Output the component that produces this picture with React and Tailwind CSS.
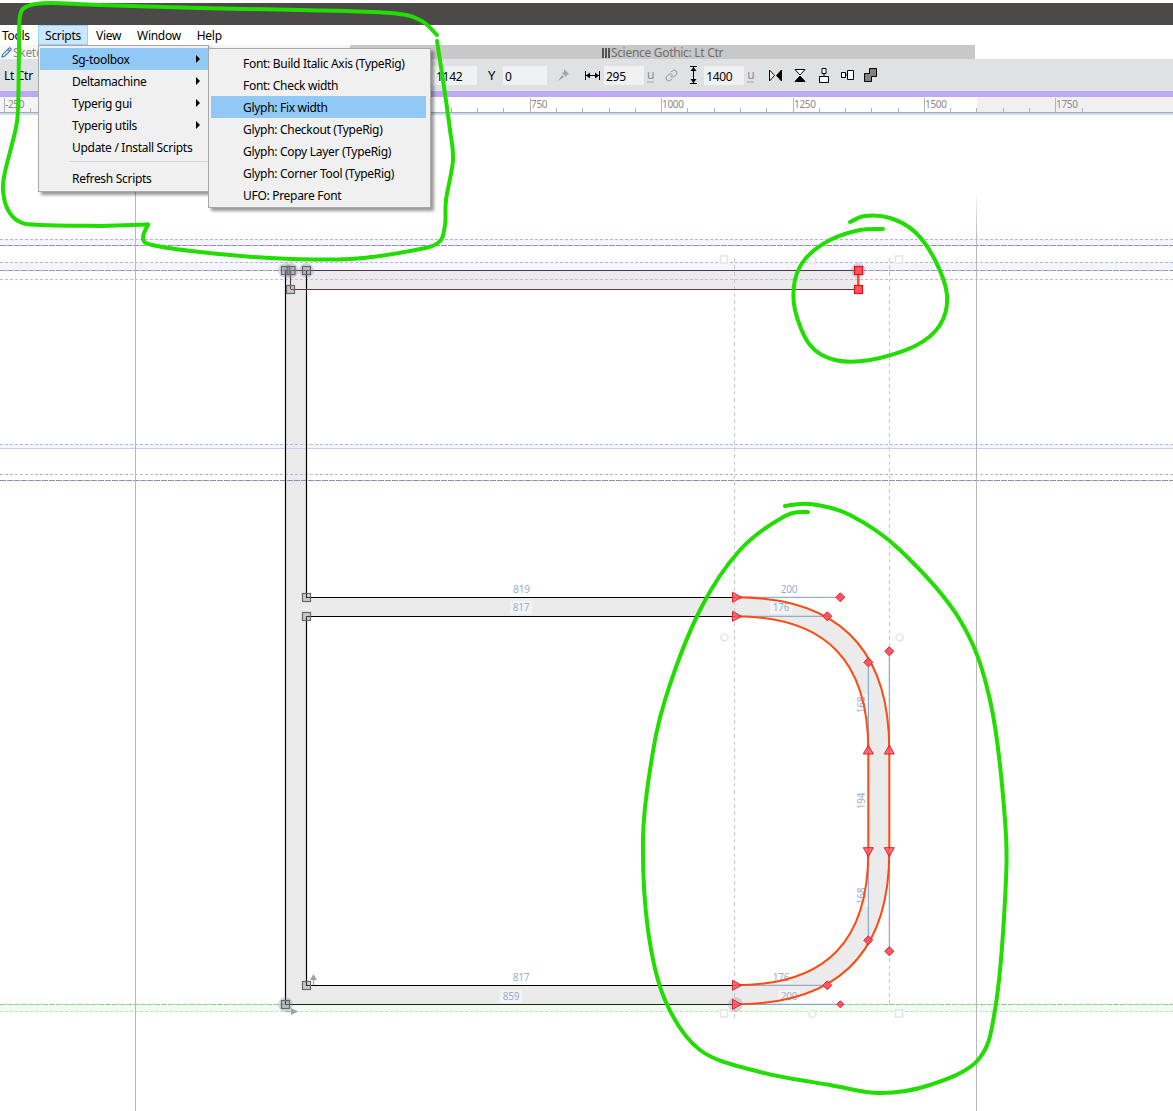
import React from "react";
import { Link as LinkIcon, Pencil } from "lucide-react";

const menuBar = ["View", "Window", "Help"];
const scripts = ["Sg-toolbox", "Deltamachine", "Typerig gui", "Typerig utils"];
const toolbox = [
  "Font: Build Italic Axis (TypeRig)",
  "Font: Check width",
  "Glyph: Fix width",
  "Glyph: Checkout (TypeRig)",
  "Glyph: Copy Layer (TypeRig)",
  "Glyph: Corner Tool (TypeRig)",
  "UFO: Prepare Font",
];

// catmull-rom through the points, good enough for hand drawn marker lines
function smooth(pts) {
  let d = `M${pts[0][0]} ${pts[0][1]}`;
  for (let i = 0; i < pts.length - 1; i++) {
    const p0 = pts[i - 1] || pts[i];
    const p1 = pts[i];
    const p2 = pts[i + 1];
    const p3 = pts[i + 2] || p2;
    d += ` C${p1[0] + (p2[0] - p0[0]) / 6} ${p1[1] + (p2[1] - p0[1]) / 6} ${p2[0] - (p3[0] - p1[0]) / 6} ${p2[1] - (p3[1] - p1[1]) / 6} ${p2[0]} ${p2[1]}`;
  }
  return d;
}

const markerTop = [[437, 35], [420, 20], [390, 13], [300, 10], [200, 8], [100, 5], [50, 3], [28, 6], [20, 16], [19, 50], [18, 110], [15, 132], [5, 172], [3, 190], [8, 210], [20, 222], [40, 225], [100, 226]];
const markerTop2 = [[100, 226], [148, 224.5]];
const markerTop3 = [[148, 224.5], [143, 238], [152, 245], [200, 252], [270, 258], [350, 259], [410, 251], [438, 243], [445, 225], [446, 200], [453, 160], [450, 130], [443, 80], [437, 41]];
const markerCorner = [[883, 229], [860, 230], [830, 240], [806, 258], [795, 280], [795, 310], [810, 345], [835, 360], [870, 360], [915, 346], [940, 325], [947, 295], [935, 260], [915, 232], [890, 218], [865, 216], [850, 222]];
const markerCurve = [[808, 512], [785, 516], [740, 550], [700, 610], [665, 700], [650, 770], [643, 840], [648, 930], [665, 1000], [700, 1050], [760, 1072], [830, 1085], [880, 1093], [930, 1085], [978, 1060], [995, 1010], [1005, 900], [1005, 820], [990, 700], [960, 620], [900, 550], [850, 515], [810, 504], [785, 506]];

function Arrow() {
  return <span className="ml-auto mr-[8px] -mt-[3px] w-0 h-0 border-y-[4px] border-y-transparent border-l-[4px] border-l-black" />;
}

function Field({ value, className }) {
  return (
    <div className={`h-[19px] bg-[#f0f1f3] pl-[2px] text-[12px] leading-[21px] text-black ${className}`}>
      {value}
    </div>
  );
}

function Unit({ className }) {
  return <span className={`border-b-2 border-[#c4c4c4] text-[12px] leading-[13px] text-[#7f8fa8] ${className}`}>u</span>;
}

function Toolbar() {
  return (
    <div className="flex h-[32px] items-center bg-[#e0e1e3] text-[12px] text-black">
      <span className="ml-[4px] w-[426px] pt-[2px]">Lt Ctr</span>
      <Field value="1142" className="w-[47px] pl-[6px]" />
      <span className="ml-[11px] w-[15px] pt-[1px] text-[13px]">Y</span>
      <Field value="0" className="w-[44px]" />
      <svg className="ml-[9px] h-[14px] w-[14px]" viewBox="0 0 14 14">
        <path d="M8 1l5 5-2 1-1 2-4-4 2-1zM6 7l-4 6 6-4z" fill="#a3a3a3" />
      </svg>
      <svg className="ml-[15px] h-[9px] w-[15px]" viewBox="0 0 15 9">
        <path d="M.5 0v9M14.500 0v9M1 4.500h13" stroke="#000" fill="none" />
        <path d="M1 4.500l4-3v6zM14 4.500l-4-3v6z" fill="#000" />
      </svg>
      <Field value="295" className="ml-[4px] w-[40px]" />
      <Unit className="ml-[3px]" />
      <LinkIcon className="ml-[11px] h-[13px] w-[13px] text-[#808080]" strokeWidth={1.5} />
      <svg className="ml-[11px] h-[18px] w-[9px]" viewBox="0 0 9 18">
        <path d="M1 .5h7M1 17.500h7M4.500 1v16" stroke="#000" fill="none" />
        <path d="M4.500 1l-3 4h6zM4.500 17l-3-4h6z" fill="#000" />
      </svg>
      <Field value="1400" className="ml-[6px] w-[40px]" />
      <Unit className="ml-[3px]" />
      <svg className="ml-[15px] h-[13px] w-[13px]" viewBox="0 0 13 13">
        <path d="M.5 1l5 5.500-5 5.500z" fill="#fff" stroke="#000" />
        <path d="M12.500 1l-5 5.500 5 5.500z" fill="#000" stroke="#000" />
      </svg>
      <svg className="ml-[12px] h-[13px] w-[12px]" viewBox="0 0 12 13">
        <path d="M1 .5h10l-5 5.500z" fill="#fff" stroke="#000" />
        <path d="M1 12.500h10l-5-5.500z" fill="#000" stroke="#000" />
      </svg>
      <svg className="ml-[13px] h-[15px] w-[10px]" viewBox="0 0 10 15">
        <path d="M3 .5h4v5H3zM.5 8.500h9v6h-9zM5 5.500v3" fill="#fff" stroke="#000" />
      </svg>
      <svg className="ml-[12px] h-[10px] w-[13px]" viewBox="0 0 13 10">
        <path d="M.5 2.500h4v5h-4zM6.500 .5h6v9h-6zM4.500 5h2" fill="#fff" stroke="#000" />
      </svg>
      <svg className="ml-[10px] h-[14px] w-[13px]" viewBox="0 0 13 14">
        <path d="M5.500 .5h7v8h-5v5h-7v-8h5z" fill="#808080" stroke="#000" />
      </svg>
    </div>
  );
}

function Ruler() {
  const xs = [];
  for (let v = -250; v <= 1800; v += 50) xs.push(v);
  return (
    <svg className="block h-[18px] w-full" viewBox="0 97 1173 18">
      <rect x="0" y="97" width="1173" height="15" fill="#fff" />
      <rect x="0" y="97" width="135" height="15" fill="#f4f4f4" />
      <rect x="977" y="97" width="196" height="15" fill="#f0f0f0" />
      {xs.map((v) => {
        const x = Math.round(135.5 + v * 0.5256) + 0.5;
        const major = v % 250 === 0;
        return <path key={v} d={`M${x} ${major ? 98 : 108}V112`} stroke="#b4b4b4" />;
      })}
      {[-250, 750, 1000, 1250, 1500, 1750].map((v) => (
        <text key={v} x={Math.round(135.5 + v * 0.5256) + 1} y="108" className="fill-[#8a8a8a] text-[10px]">
          {v}
        </text>
      ))}
      <rect x="0" y="112" width="1173" height="1" fill="#a8a8a8" />
      <rect x="0" y="113" width="1173" height="2" fill="#ccdcf2" />
    </svg>
  );
}

function Square({ x, y }) {
  return <rect x={x - 4} y={y - 4} width="8" height="8" fill="#88888855" stroke="#666" strokeWidth="1.200" />;
}

function RedSquare({ x, y }) {
  return <rect x={x - 4} y={y - 4} width="8" height="8" fill="#ff5560" stroke="#e0101c" strokeWidth="1.200" />;
}

function Diamond({ x, y, r = 4.5 }) {
  return <path d={`M${x - r} ${y}L${x} ${y - r}L${x + r} ${y}L${x} ${y + r}z`} fill="#ff5560" stroke="#d8202c" />;
}

function Tri({ x, y, dir }) {
  const d = {
    right: `M${x - 2.5} ${y - 5}L${x + 6.5} ${y}L${x - 2.5} ${y + 5}z`,
    up: `M${x} ${y - 5}L${x + 5} ${y + 4}L${x - 5} ${y + 4}z`,
    down: `M${x} ${y + 5}L${x + 5} ${y - 4}L${x - 5} ${y - 4}z`,
  }[dir];
  return <path d={d} fill="#ff5560" fillOpacity="0.8" stroke="#e0202c" />;
}

function Label({ x, y, plate, rotate, children }) {
  return (
    <g transform={rotate ? `rotate(-90 ${x} ${y})` : undefined}>
      {plate && <rect x={x - 11} y={y - 7} width="22" height="13" fill="#fff" fillOpacity="0.45" />}
      <text x={x} y={y + 3} textAnchor="middle" className="fill-[#94aed0] text-[10px]">
        {children}
      </text>
    </g>
  );
}

function Canvas() {
  const handles = "M735 597.300H840.300M735 616.300H827.300M868.300 662.300V750M889.300 651.300V750M868.300 851.700V940.300M889.300 851.700V951.300M735 985.300H827.300M735 1004.300H840.300";
  return (
    <svg className="block h-[996px] w-full" viewBox="0 115 1173 996">
      <defs>
        <linearGradient id="fade" x1="0" y1="0" x2="0" y2="1">
          <stop offset="0" stopColor="#b8b8b8" stopOpacity="0" />
          <stop offset="0.05" stopColor="#b8b8b8" />
        </linearGradient>
      </defs>

      <rect x="0" y="239" width="1173" height="6" fill="#f5f5fd" />
      <rect x="0" y="262" width="1173" height="8" fill="#f5f5fd" />
      <rect x="0" y="444" width="1173" height="4" fill="#f5f5fd" />
      <rect x="0" y="1004" width="1173" height="8" fill="#f3fcf3" />

      <path
        d="M285.300 270.300H858.300V289.300H306.300V597.300H735C840.300 597.300 889.300 651.300 889.300 750V851.700C889.300 951.300 840.300 1004.300 735 1004.300H285.300zM306.300 616.300V985.300H735C827.300 985.300 868.300 940.300 868.300 851.700V750C868.300 662.300 827.300 616.300 735 616.300z"
        fill="#ebebeb"
        fillRule="evenodd"
      />

      <g fill="none" strokeWidth="1">
        <path d="M0 239.500H1173M0 262.500H1173M0 444.500H1173M0 474.500H1173" stroke="#b4b4ea" strokeDasharray="3 2" />
        <path d="M0 245.500H1173M0 480.500H1173" stroke="#8f8fb4" strokeDasharray="6 1" />
        <path d="M0 270.500H1173" stroke="#9a94b8" strokeDasharray="6 1" />
        <path d="M0 279.500H1173" stroke="#d4b4d4" strokeDasharray="3 2" />
        <path d="M0 448.500H1173" stroke="#ccccf2" />
        <path d="M0 1004.500H1173" stroke="#8fcc8f" strokeDasharray="6 1" />
        <path d="M0 1011.500H1173" stroke="#b5e6b5" strokeDasharray="3 2" />
        <path d="M135.500 115V1111" stroke="#b8b8b8" />
        <path d="M734.500 258V1020M889.500 258V1004" stroke="#c8c8c8" strokeDasharray="4 3" />
      </g>
      <rect x="976" y="190" width="1" height="921" fill="url(#fade)" />

      <g fill="#fff" stroke="#e4e4e4" strokeWidth="1.500">
        <rect x="720.500" y="256" width="7" height="7" />
        <circle cx="812.500" cy="260" r="3.500" />
        <rect x="895.500" y="256" width="7" height="7" />
        <circle cx="724.500" cy="637.500" r="3.500" />
        <circle cx="899.500" cy="637.500" r="3.500" />
        <rect x="720.500" y="1010" width="7" height="7" />
        <circle cx="812.500" cy="1014" r="3.500" />
        <rect x="895.500" y="1010" width="7" height="7" />
      </g>

      <g fill="none" stroke="#000" strokeWidth="1.200">
        <path d="M285.500 270V1004.500M306.500 270V597.500H735M306.500 616.500V985.500H735M306.500 616.500H735" />
        <path d="M285.500 1004.500H735" stroke="#0c2a0c" />
        <path d="M285.500 270.500H855" stroke="#4f2f52" />
        <path d="M290.500 289.500H855M290.500 271V289" stroke="#5a3a3a" />
      </g>

      <path d={handles} fill="none" stroke="#7f9cc0" strokeWidth="1" />

      <Label x={521.500} y={590}>819</Label>
      <Label x={521} y={608} plate>817</Label>
      <Label x={521} y={978}>817</Label>
      <Label x={511} y={997} plate>859</Label>
      <Label x={789} y={590}>200</Label>
      <Label x={781} y={608} plate>176</Label>
      <Label x={781} y={978} plate>176</Label>
      <Label x={789} y={997} plate>200</Label>
      <Label x={862} y={705} plate rotate>168</Label>
      <Label x={862} y={801} rotate>194</Label>
      <Label x={862} y={896} plate rotate>168</Label>

      <g fill="none" stroke="#ff4a12" strokeWidth="2">
        <path d="M735 597.300C840.300 597.300 889.300 651.300 889.300 750V851.700C889.300 951.300 840.300 1004.300 735 1004.300" />
        <path d="M735 616.300C827.300 616.300 868.300 662.300 868.300 750V851.700C868.300 940.300 827.300 985.300 735 985.300" />
        <path d="M858.300 270.300V289.300" strokeWidth="2.500" />
      </g>

      <g fill="#7d8ba0" fillOpacity="0.3">
        <circle cx="285.500" cy="270.500" r="7.500" />
        <circle cx="291" cy="270.500" r="7.500" />
        <circle cx="306.500" cy="270.500" r="7.500" />
        <circle cx="285.500" cy="1004.500" r="7.500" />
        <circle cx="735.500" cy="1004.500" r="7.500" />
        <circle cx="858.500" cy="270.500" r="7.500" />
      </g>

      <Square x={285.500} y={270.500} />
      <Square x={291} y={270.500} />
      <Square x={306.500} y={270.500} />
      <Square x={290.500} y={289.500} />
      <Square x={306.500} y={597.500} />
      <Square x={306.500} y={616.500} />
      <Square x={306.500} y={985.500} />
      <Square x={285.500} y={1004.500} />

      <path d="M313.500 985V977" stroke="#b0b0b0" strokeWidth="1.500" />
      <path d="M313.500 974l3.500 6h-7z" fill="#a0a0a0" />
      <path d="M286 1011.500H292" stroke="#b0b0b0" strokeWidth="1.500" />
      <path d="M298 1011.500l-7 3.500v-7z" fill="#a0a0a0" />

      <RedSquare x={858.500} y={270.500} />
      <RedSquare x={858.500} y={289.500} />

      <Tri x={735} y={597.300} dir="right" />
      <Tri x={735} y={616.300} dir="right" />
      <Tri x={735} y={985.300} dir="right" />
      <Tri x={735} y={1004.300} dir="right" />
      <Tri x={868.300} y={750} dir="up" />
      <Tri x={889.300} y={750} dir="up" />
      <Tri x={868.300} y={851.700} dir="down" />
      <Tri x={889.300} y={851.700} dir="down" />

      <Diamond x={840.300} y={597.300} />
      <Diamond x={827.300} y={616.300} />
      <Diamond x={868.300} y={662.300} />
      <Diamond x={889.300} y={651.300} />
      <Diamond x={868.300} y={940.300} />
      <Diamond x={889.300} y={951.300} />
      <Diamond x={827.300} y={985.300} />
      <Diamond x={840.300} y={1004.300} r={3.500} />
    </svg>
  );
}

function Menus() {
  return (
    <>
      <div className="absolute left-[38px] top-[45px] z-10 h-[147px] w-[171px] border border-[#a8a8a8] bg-[#f0f0f0] pl-[1px] pt-[2px] text-[12px] text-black shadow-[3px_3px_3px_rgba(0,0,0,0.4)]">
        {scripts.map((s, i) => (
          <div key={s} className={`flex h-[22px] items-center pl-[32px] pt-[2px] ${i === 0 ? "bg-[#90c8f6]" : ""}`}>
            {s}
            <Arrow />
          </div>
        ))}
        <div className="flex h-[22px] items-center pl-[32px] pt-[2px]">Update / Install Scripts</div>
        <div className="ml-[29px] mt-[3px] h-px bg-[#d4d4d4]" />
        <div className="mt-[5px] flex h-[22px] items-center pl-[32px] pt-[2px]">Refresh Scripts</div>
      </div>
      <div className="absolute left-[208px] top-[48px] z-10 h-[160px] w-[223px] border border-[#a8a8a8] bg-[#f0f0f0] pl-[2px] pt-[3px] text-[12px] text-black shadow-[3px_3px_3px_rgba(0,0,0,0.4)]">
        {toolbox.map((s, i) => (
          <div key={s} className={`flex h-[22px] w-[215px] items-center pl-[32px] pt-[2px] ${i === 2 ? "bg-[#90c8f6]" : ""}`}>
            {s}
          </div>
        ))}
      </div>
    </>
  );
}

export default function App() {
  return (
    <div className="relative h-[1111px] w-full overflow-hidden bg-white font-['Noto_Sans',sans-serif] tracking-[-0.3px]">
      <div className="mt-[3px] h-[22px] bg-[#4b4a48]" />
      <div className="flex h-[20px] items-center text-[12px] text-black">
        <span className="ml-[2px] w-[36px] pt-[2px]">Tools</span>
        <span className="flex h-[20px] w-[50px] items-center justify-center border border-[#99d1ff] bg-[#cce8ff] pt-[2px]">Scripts</span>
        <div className="ml-[8px] flex gap-[16px] pt-[2px]">
          {menuBar.map((m) => (
            <span key={m}>{m}</span>
          ))}
        </div>
      </div>
      <div className="flex h-[14px] text-[12px]">
        <div className="flex w-[350px] items-center bg-[#f6f6f6] pl-[1px] pt-[1px] text-[#8a8a8a]">
          <Pencil className="h-[11px] w-[11px] text-[#3a78c8]" strokeWidth={2.5} />
          <span className="ml-[1px]">Sketch</span>
        </div>
        <div className="flex w-[625px] items-center justify-center bg-[#c8c8c8] pt-[2px] text-[#6e6e6e]">
          <span className="mr-[1px] h-[10px] w-[8px] bg-[repeating-linear-gradient(90deg,#555_0,#555_2px,transparent_2px,transparent_3px)]" />
          Science Gothic: Lt Ctr
        </div>
      </div>
      <Toolbar />
      <div className="h-[6px] bg-[#bfa8f3]" />
      <Ruler />
      <Canvas />
      <Menus />
      <svg className="pointer-events-none absolute inset-0 z-20 h-[1111px] w-[1173px]" viewBox="0 0 1173 1111" fill="none" stroke="#22dd00" strokeWidth="4" strokeLinecap="round" strokeLinejoin="round">
        <path d={smooth(markerTop)} />
        <path d={smooth(markerTop2)} />
        <path d={smooth(markerTop3)} />
        <path d={smooth(markerCorner)} />
        <path d={smooth(markerCurve)} />
      </svg>
    </div>
  );
}
